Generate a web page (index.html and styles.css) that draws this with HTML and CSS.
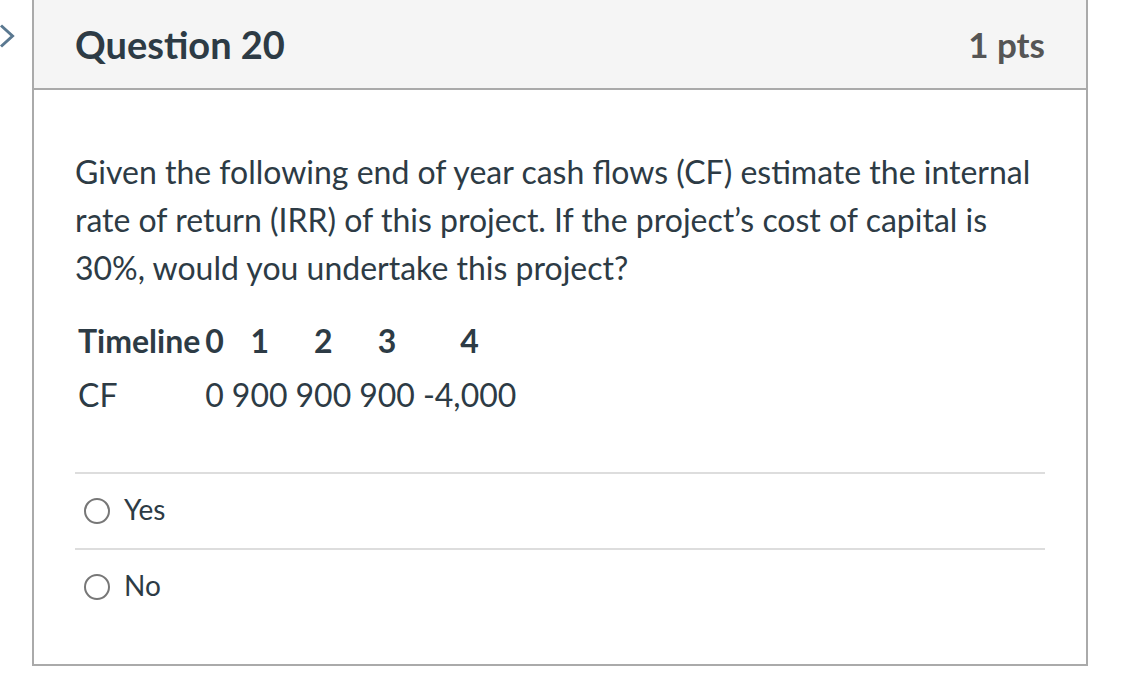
FILE: index.html
```html
<!DOCTYPE html>
<html>
<head>
<meta charset="utf-8">
<link rel="stylesheet" href="styles.css">
</head>
<body>
<div class="page">
  <div class="nav">
    <svg width="16" height="26" viewBox="0 0 16 26"><path d="M1 1.5 L12.5 12 L1 22.5" fill="none" stroke="#5a7890" stroke-width="3"/></svg>
  </div>
  <div class="card">
    <div class="card-header">
      <span class="title">Question 20</span>
      <span class="pts">1 pts</span>
    </div>
    <div class="card-body">
      <p class="question">Given the following end of year cash flows (CF) estimate the internal rate of return (IRR) of this project. If the project’s cost of capital is 30%, would you undertake this project?</p>
      <table class="cf">
        <tr class="head"><td class="label">Timeline</td><td>0</td><td>1</td><td>2</td><td>3</td><td>4</td></tr>
        <tr><td class="label">CF</td><td>0</td><td>900</td><td>900</td><td>900</td><td>-4,000</td></tr>
      </table>
      <div class="answers">
        <label class="answer"><span class="radio"></span><span class="answer-text">Yes</span></label>
        <label class="answer"><span class="radio"></span><span class="answer-text">No</span></label>
      </div>
    </div>
  </div>
</div>
</body>
</html>
```
FILE: styles.css
```css
html, body {
  margin: 0;
  padding: 0;
  background: #fff;
}
body {
  font-family: Lato, "Open Sans", sans-serif;
  color: #2d3b45;
}
.page {
  display: flex;
  align-items: flex-start;
  width: 1142px;
  height: 690px;
  overflow: hidden;
}
.nav {
  width: 32px;
  padding-top: 24px;
}
.nav svg {
  display: block;
}
.card {
  width: 1052px;
  height: 664px;
  border: 2px solid #aaaaaa;
  border-top: none;
}
.card-header {
  height: 90px;
  box-sizing: border-box;
  background: #f5f5f5;
  border-bottom: 2px solid #aaaaaa;
  display: flex;
  align-items: center;
  justify-content: space-between;
  padding: 0 41px 0 41px;
}
.title {
  font-size: 38px;
  font-weight: 700;
  color: #2d3b45;
}
.pts {
  font-size: 35px;
  font-weight: 700;
  color: #555555;
}
.card-body {
  padding: 0 41px;
}
.question {
  margin: 0;
  padding-top: 58px;
  font-size: 32px;
  line-height: 48px;
}
.cf {
  margin-top: 22px;
  margin-left: -1px;
  border-collapse: collapse;
  font-size: 32px;
  line-height: 54px;
}
.cf td {
  padding: 0 4px;
  text-align: center;
}
.cf td.label {
  text-align: left;
  padding-right: 1px;
}
.cf .head td {
  font-weight: 700;
}
.answers {
  margin-top: 50px;
}
.answer {
  display: flex;
  align-items: center;
  gap: 14px;
  height: 74px;
  border-top: 2px solid #dddddd;
  padding-left: 9px;
  font-size: 28px;
}
.answer-text {
  padding-bottom: 4px;
}
.radio {
  width: 22px;
  height: 22px;
  border: 2px solid #777777;
  border-radius: 50%;
  box-sizing: content-box;
}
```
